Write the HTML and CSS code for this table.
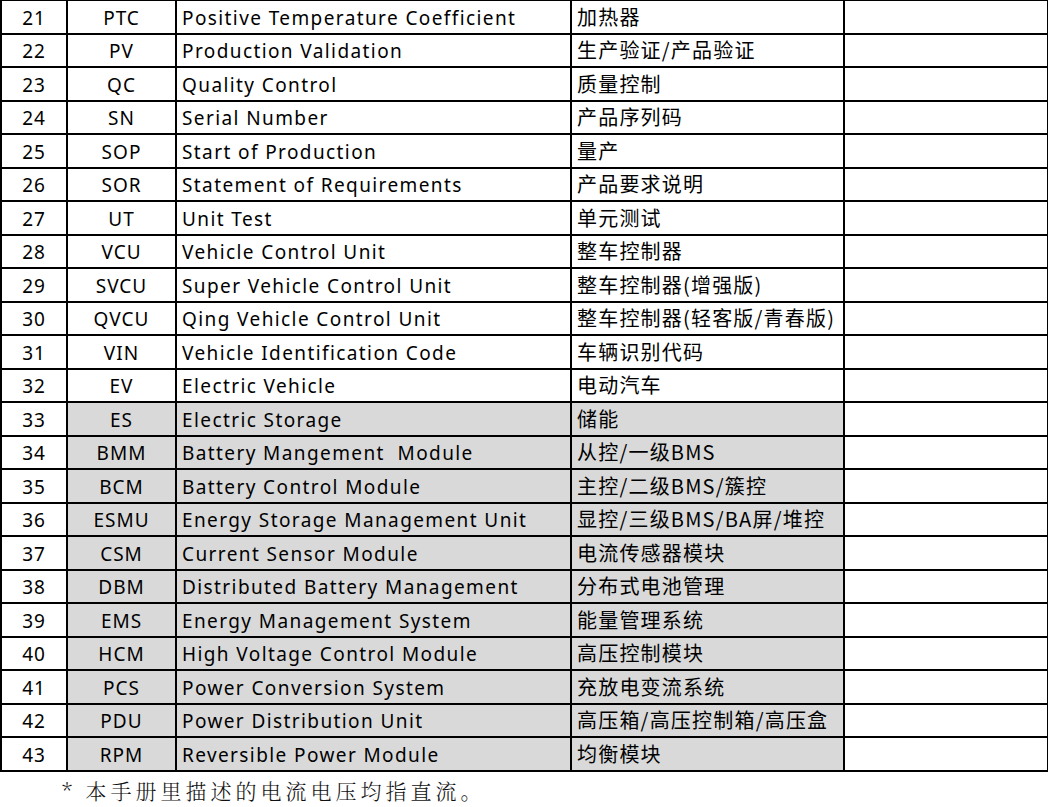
FILE: index.html
```html
<!DOCTYPE html>
<html lang="zh">
<head>
<meta charset="utf-8">
<link rel="stylesheet" href="styles.css">
</head>
<body>
<table class="glossary">
<colgroup>
<col class="c-num"><col class="c-abbr"><col class="c-en"><col class="c-zh"><col class="c-blank">
</colgroup>
<tbody>
<tr><td class="num">21</td><td class="abbr">PTC</td><td class="en">Positive Temperature Coefficient</td><td class="zh">加热器</td><td></td></tr>
<tr><td class="num">22</td><td class="abbr">PV</td><td class="en">Production Validation</td><td class="zh">生产验证/产品验证</td><td></td></tr>
<tr><td class="num">23</td><td class="abbr">QC</td><td class="en">Quality Control</td><td class="zh">质量控制</td><td></td></tr>
<tr><td class="num">24</td><td class="abbr">SN</td><td class="en">Serial Number</td><td class="zh">产品序列码</td><td></td></tr>
<tr><td class="num">25</td><td class="abbr">SOP</td><td class="en">Start of Production</td><td class="zh">量产</td><td></td></tr>
<tr><td class="num">26</td><td class="abbr">SOR</td><td class="en">Statement of Requirements</td><td class="zh">产品要求说明</td><td></td></tr>
<tr><td class="num">27</td><td class="abbr">UT</td><td class="en">Unit Test</td><td class="zh">单元测试</td><td></td></tr>
<tr><td class="num">28</td><td class="abbr">VCU</td><td class="en">Vehicle Control Unit</td><td class="zh">整车控制器</td><td></td></tr>
<tr><td class="num">29</td><td class="abbr">SVCU</td><td class="en">Super Vehicle Control Unit</td><td class="zh">整车控制器(增强版)</td><td></td></tr>
<tr><td class="num">30</td><td class="abbr">QVCU</td><td class="en">Qing Vehicle Control Unit</td><td class="zh">整车控制器(轻客版/青春版)</td><td></td></tr>
<tr><td class="num">31</td><td class="abbr">VIN</td><td class="en">Vehicle Identification Code</td><td class="zh">车辆识别代码</td><td></td></tr>
<tr><td class="num">32</td><td class="abbr">EV</td><td class="en">Electric Vehicle</td><td class="zh">电动汽车</td><td></td></tr>
<tr class="es"><td class="num">33</td><td class="abbr">ES</td><td class="en">Electric Storage</td><td class="zh">储能</td><td></td></tr>
<tr class="es"><td class="num">34</td><td class="abbr">BMM</td><td class="en">Battery Mangement&nbsp; Module</td><td class="zh">从控/一级BMS</td><td></td></tr>
<tr class="es"><td class="num">35</td><td class="abbr">BCM</td><td class="en">Battery Control Module</td><td class="zh">主控/二级BMS/簇控</td><td></td></tr>
<tr class="es"><td class="num">36</td><td class="abbr">ESMU</td><td class="en">Energy Storage Management Unit</td><td class="zh">显控/三级BMS/BA屏/堆控</td><td></td></tr>
<tr class="es"><td class="num">37</td><td class="abbr">CSM</td><td class="en">Current Sensor Module</td><td class="zh">电流传感器模块</td><td></td></tr>
<tr class="es"><td class="num">38</td><td class="abbr">DBM</td><td class="en">Distributed Battery Management</td><td class="zh">分布式电池管理</td><td></td></tr>
<tr class="es"><td class="num">39</td><td class="abbr">EMS</td><td class="en">Energy Management System</td><td class="zh">能量管理系统</td><td></td></tr>
<tr class="es"><td class="num">40</td><td class="abbr">HCM</td><td class="en">High Voltage Control Module</td><td class="zh">高压控制模块</td><td></td></tr>
<tr class="es"><td class="num">41</td><td class="abbr">PCS</td><td class="en">Power Conversion System</td><td class="zh">充放电变流系统</td><td></td></tr>
<tr class="es"><td class="num">42</td><td class="abbr">PDU</td><td class="en">Power Distribution Unit</td><td class="zh">高压箱/高压控制箱/高压盒</td><td></td></tr>
<tr class="es"><td class="num">43</td><td class="abbr">RPM</td><td class="en">Reversible Power Module</td><td class="zh">均衡模块</td><td></td></tr>
</tbody>
</table>
<p class="note">* 本手册里描述的电流电压均指直流。</p>
</body>
</html>
```
FILE: styles.css
```css
html, body {
  margin: 0;
  padding: 0;
  background: #ffffff;
}
body {
  width: 1048px;
  height: 807px;
  overflow: hidden;
  font-family: "Noto Sans", "Noto Sans CJK SC", sans-serif;
  color: #000000;
}
.glossary {
  border-collapse: collapse;
  table-layout: fixed;
  width: 1047px;
  margin: -1px 0 0 0;
}
.c-num { width: 66px; }
.c-abbr { width: 109px; }
.c-en { width: 395px; }
.c-zh { width: 273px; }
.c-blank { width: 204px; }
.glossary td {
  border: 2px solid #000000;
  height: 29.5px;
  padding: 0;
  font-size: 19px;
  line-height: 20px;
  white-space: nowrap;
  overflow: hidden;
  vertical-align: middle;
}
.glossary td.num,
.glossary td.abbr {
  text-align: center;
  padding-top: 2px;
  letter-spacing: 1px;
}
.glossary td.en {
  padding-left: 5px;
  padding-top: 2px;
  letter-spacing: 1.4px;
}
.glossary td.zh {
  padding-left: 5px;
  font-family: "Noto Sans CJK SC", sans-serif;
  font-size: 20px;
  letter-spacing: 1.2px;
}
.glossary tr.es td.abbr,
.glossary tr.es td.en,
.glossary tr.es td.zh {
  background: #d9d9d9;
}
.note {
  margin: 3px 0 0 62px;
  font-family: "Noto Serif CJK SC", "Noto Sans CJK SC", serif;
  font-size: 21px;
  font-weight: 300;
  letter-spacing: 4px;
  color: #111111;
  line-height: 30px;
}
```
